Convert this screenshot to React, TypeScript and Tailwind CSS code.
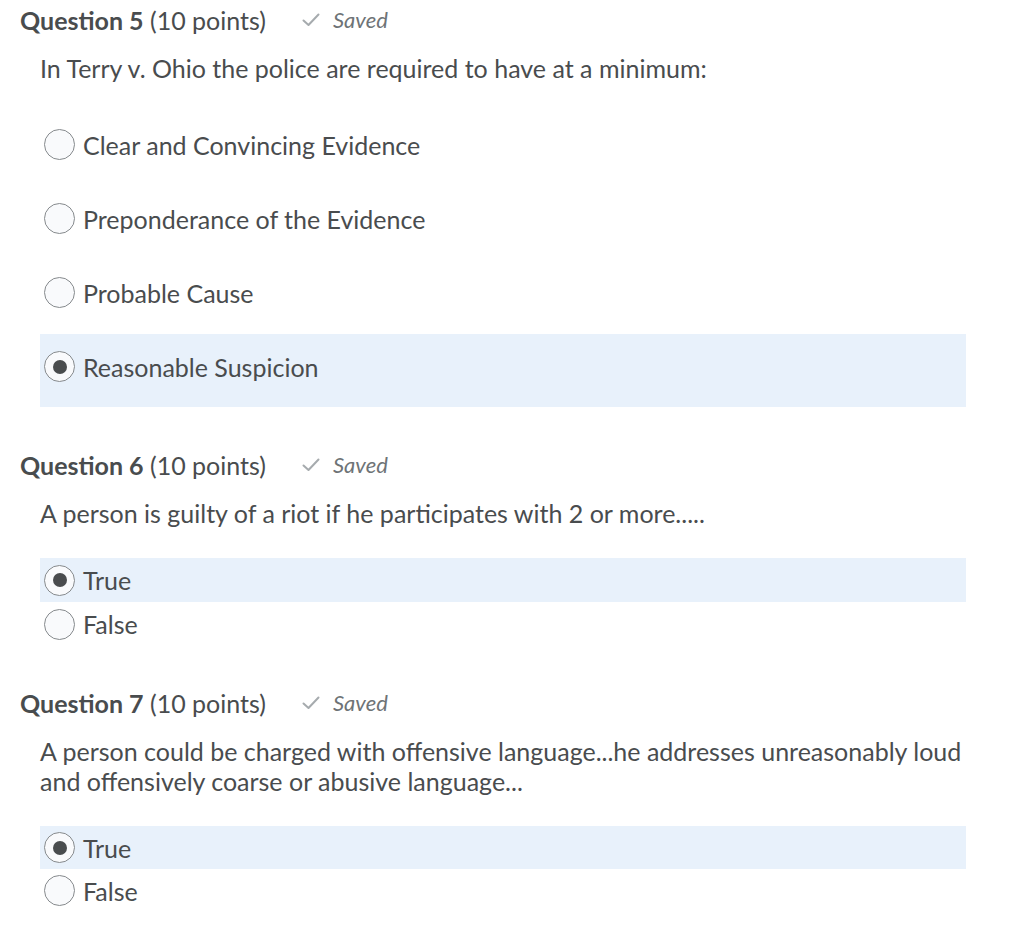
import React from "react";

type Q = {
  num: number;
  text: string;
  options: string[];
  selected: number;
  rowClass: string;
  listClass: string;
  textGap: string;
  after: string;
};

const questions: Q[] = [
  {
    num: 5,
    text: "In Terry v. Ohio the police are required to have at a minimum:",
    options: [
      "Clear and Convincing Evidence",
      "Preponderance of the Evidence",
      "Probable Cause",
      "Reasonable Suspicion",
    ],
    selected: 3,
    rowClass: "h-[73px] pb-[8px]",
    listClass: "gap-[1px]",
    textGap: "mb-[29px]",
    after: "mb-[43px]",
  },
  {
    num: 6,
    text: "A person is guilty of a riot if he participates with 2 or more.....",
    options: ["True", "False"],
    selected: 0,
    rowClass: "h-[44px]",
    listClass: "",
    textGap: "mb-[30px]",
    after: "mb-[42px]",
  },
  {
    num: 7,
    text: "A person could be charged with offensive language...he addresses unreasonably loud and offensively coarse or abusive language...",
    options: ["True", "False"],
    selected: 0,
    rowClass: "h-[43px]",
    listClass: "",
    textGap: "mb-[30px]",
    after: "",
  },
];

function Radio({ checked }: { checked: boolean }) {
  return (
    <span className="flex h-[31px] w-[31px] shrink-0 items-center justify-center rounded-full border border-[#868a8d] bg-[#f9fafc]">
      {checked && <span className="h-[14px] w-[14px] rounded-full bg-[#494c4e]" />}
    </span>
  );
}

function SavedMark() {
  return (
    <span className="ml-[36px] flex items-center gap-[13px] text-[22px] italic text-[#6e7376]">
      <svg width="18" height="14" viewBox="0 0 18 14" fill="none">
        <path d="M1.5 7.5 L6.5 12 L16.5 1.5" stroke="#a6abae" strokeWidth="2" strokeLinecap="round" strokeLinejoin="round" />
      </svg>
      Saved
    </span>
  );
}

export default function App() {
  return (
    <div className="min-h-screen bg-white pt-[5px] pl-[20px] text-[#494c4e]" style={{ fontFamily: "Lato, 'Open Sans', sans-serif" }}>
      {questions.map((q) => (
        <div key={q.num} className={q.after}>
          <div className="flex h-[30px] items-center text-[25px] leading-[30px]">
            <span>
              <span className="font-bold">Question {q.num}</span> (10 points)
            </span>
            <SavedMark />
          </div>
          <div className="mt-[18px] ml-[20px] w-[926px]">
            <p className={`text-[25px] leading-[30px] ${q.textGap}`}>{q.text}</p>
            <div className={`flex flex-col ${q.listClass}`}>
              {q.options.map((opt, i) => (
                <div
                  key={opt}
                  className={`flex items-center pl-[4px] ${q.rowClass} ${i === q.selected ? "bg-[#e8f1fb]" : ""}`}
                >
                  <Radio checked={i === q.selected} />
                  <span className="ml-[8px] text-[25px] leading-[30px]">{opt}</span>
                </div>
              ))}
            </div>
          </div>
        </div>
      ))}
    </div>
  );
}
